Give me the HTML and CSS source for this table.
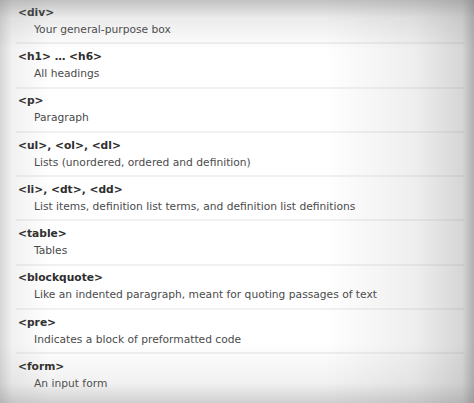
FILE: index.html
```html
<!DOCTYPE html>
<html>
<head>
<meta charset="utf-8">
<link rel="stylesheet" href="styles.css">
</head>
<body>
<div class="page">
  <ul class="tags">
    <li class="row"><div class="tag">&lt;div&gt;</div><div class="desc">Your general-purpose box</div></li>
    <li class="row"><div class="tag">&lt;h1&gt; … &lt;h6&gt;</div><div class="desc">All headings</div></li>
    <li class="row"><div class="tag">&lt;p&gt;</div><div class="desc">Paragraph</div></li>
    <li class="row"><div class="tag">&lt;ul&gt;, &lt;ol&gt;, &lt;dl&gt;</div><div class="desc">Lists (unordered, ordered and definition)</div></li>
    <li class="row"><div class="tag">&lt;li&gt;, &lt;dt&gt;, &lt;dd&gt;</div><div class="desc">List items, definition list terms, and definition list definitions</div></li>
    <li class="row"><div class="tag">&lt;table&gt;</div><div class="desc">Tables</div></li>
    <li class="row"><div class="tag">&lt;blockquote&gt;</div><div class="desc">Like an indented paragraph, meant for quoting passages of text</div></li>
    <li class="row"><div class="tag">&lt;pre&gt;</div><div class="desc">Indicates a block of preformatted code</div></li>
    <li class="row"><div class="tag">&lt;form&gt;</div><div class="desc">An input form</div></li>
  </ul>
  <div class="vignette"></div>
</div>
</body>
</html>
```
FILE: styles.css
```css
html, body {
  margin: 0;
  padding: 0;
  background: #ffffff;
}
.page {
  position: relative;
  width: 474px;
  height: 403px;
  overflow: hidden;
  font-family: "DejaVu Sans", Verdana, sans-serif;
}
.tags {
  list-style: none;
  margin: 0;
  padding: 0 10px 0 16px;
}
.row {
  height: 42.3px;
  border-bottom: 2px solid #f1f1f1;
  padding-left: 2px;
  display: flex;
  flex-direction: column;
  justify-content: center;
  gap: 2px;
}
.row:last-child {
  border-bottom: none;
}
.tag {
  font-size: 10.7px;
  font-weight: bold;
  color: #2e2e2e;
  line-height: 14px;
}
.desc {
  font-size: 10.7px;
  color: #4a4a4a;
  line-height: 15px;
  padding-left: 16px;
}
.vignette {
  position: absolute;
  inset: 0;
  pointer-events: none;
  background:
    linear-gradient(to bottom, rgba(120,120,120,0.45) 0px, rgba(120,120,120,0.15) 18px, rgba(120,120,120,0) 50px),
    linear-gradient(to top, rgba(120,120,120,0.35) 0px, rgba(120,120,120,0.1) 20px, rgba(120,120,120,0) 60px),
    linear-gradient(to left, rgba(110,110,110,0.55) 0px, rgba(120,120,120,0.3) 12px, rgba(120,120,120,0.12) 60px, rgba(120,120,120,0) 150px),
    linear-gradient(to right, rgba(120,120,120,0.3) 0px, rgba(120,120,120,0.1) 12px, rgba(120,120,120,0) 50px);
}
```
